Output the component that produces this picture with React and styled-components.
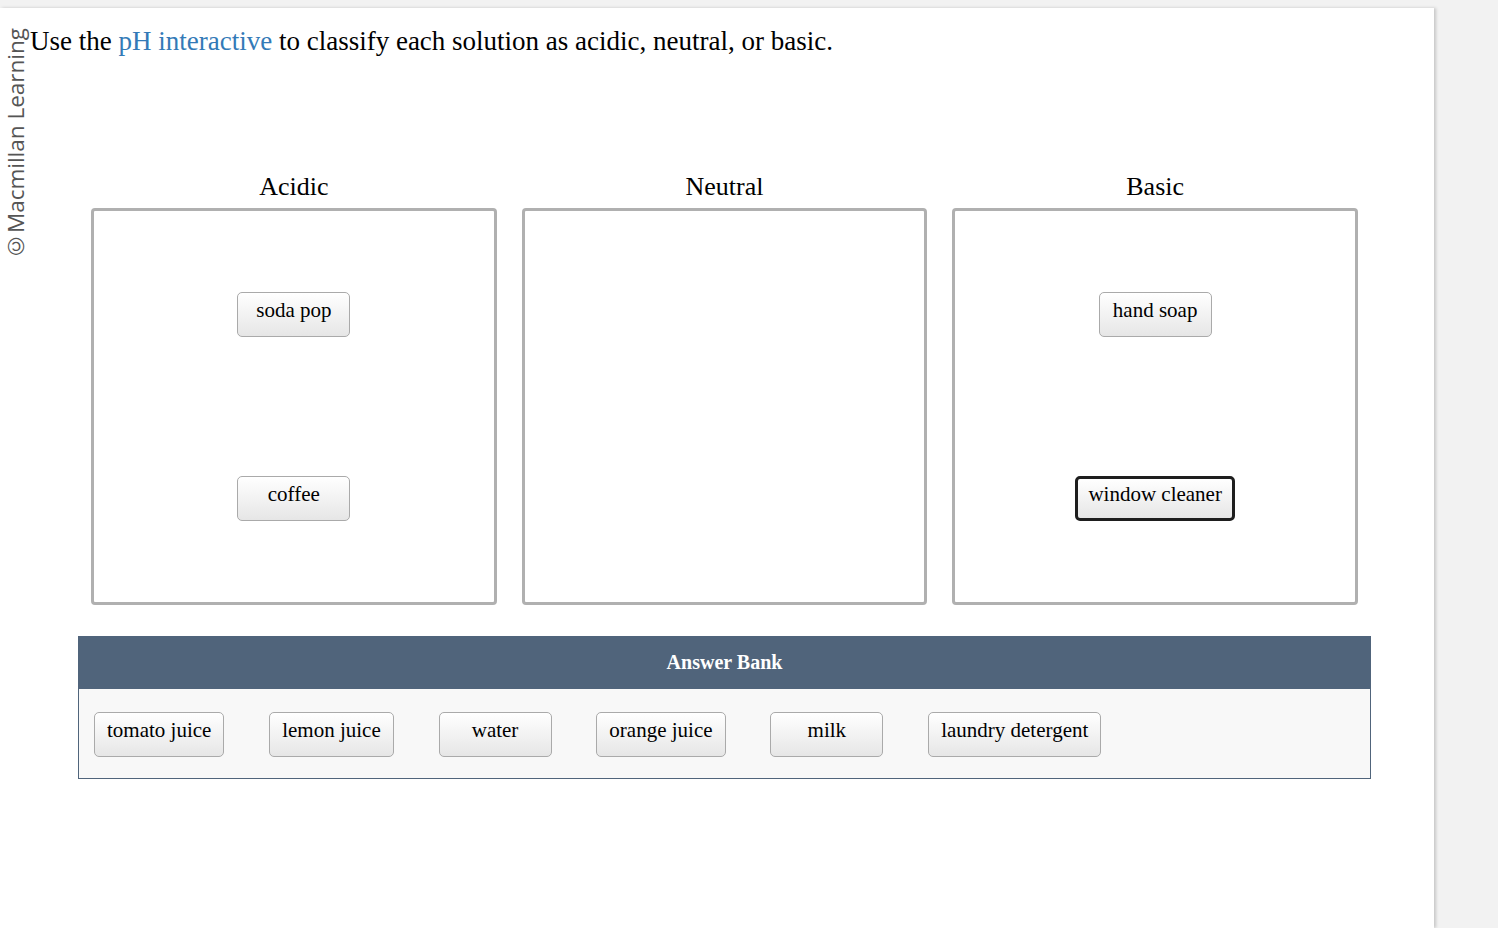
import React from "react";
import styled, { createGlobalStyle, css } from "styled-components";

const GlobalStyle = createGlobalStyle`
  html, body {
    margin: 0;
    padding: 0;
    background: #f2f2f2;
  }
  body {
    font-family: "Liberation Serif", "Times New Roman", serif;
    color: #000;
  }
`;

const Sheet = styled.div`
  position: relative;
  margin-top: 8px;
  width: 1434px;
  min-height: 920px;
  background: #ffffff;
  box-shadow: 2px 0 3px rgba(0, 0, 0, 0.18);
  padding: 18px 0 0 30px;
  box-sizing: border-box;
`;

const Copyright = styled.div`
  position: absolute;
  left: 4px;
  top: 20px;
  writing-mode: vertical-rl;
  transform: rotate(180deg);
  font-family: "Open Sans", "DejaVu Sans", sans-serif;
  font-size: 22.5px;
  line-height: 24px;
  color: #555;
  white-space: nowrap;
`;

const CopyMark = styled.span`
  font-family: "Liberation Sans", Arial, sans-serif;
  font-size: 23px;
  margin-right: 5px;
`;

const Prompt = styled.p`
  margin: 0;
  font-size: 27px;
  line-height: 31px;
`;

const Link = styled.a`
  color: #337ab7;
  text-decoration: none;
`;

const Workspace = styled.div`
  width: 1293px;
  margin: 115px 0 0 48px;
`;

const Bins = styled.div`
  display: grid;
  grid-template-columns: repeat(3, 1fr);
  gap: 25px;
  padding: 0 13px;
`;

const Bin = styled.section`
  display: flex;
  flex-direction: column;
  align-items: center;
`;

const BinTitle = styled.h3`
  margin: 0 0 7px;
  font-size: 26px;
  line-height: 29px;
  font-weight: normal;
`;

const Drop = styled.div`
  width: 100%;
  height: 397px;
  box-sizing: border-box;
  border: 3px solid #b0b0b0;
  border-radius: 4px;
  display: flex;
  flex-direction: column;
  align-items: center;
  justify-content: center;
  gap: 139px;
`;

const Chip = styled.button`
  height: 45px;
  min-width: 113px;
  box-sizing: border-box;
  padding: 5px 12px 0;
  display: inline-flex;
  justify-content: center;
  align-items: flex-start;
  font-family: "Liberation Serif", "Times New Roman", serif;
  font-size: 21px;
  line-height: 24px;
  color: #000;
  white-space: nowrap;
  border: 1px solid #aaaaaa;
  border-radius: 5px;
  background: linear-gradient(#ffffff, #e6e6e6);
  cursor: pointer;
  ${(p) =>
    p.$selected &&
    css`
      border: 3px solid #1e1e1e;
      padding: 3px 10px 0;
    `}
`;

const Bank = styled.div`
  margin-top: 31px;
  border: 1px solid #50647b;
  background: #f8f8f8;
`;

const BankHeader = styled.div`
  height: 52px;
  padding-bottom: 1px;
  box-sizing: border-box;
  background: #50647b;
  color: #fff;
  font-weight: bold;
  font-size: 20px;
  display: flex;
  align-items: center;
  justify-content: center;
`;

const BankItems = styled.div`
  display: flex;
  gap: 44.8px;
  padding: 23px 15px 21px;
`;

const bins = [
  { title: "Acidic", items: ["soda pop", "coffee"] },
  { title: "Neutral", items: [] },
  { title: "Basic", items: ["hand soap", "window cleaner"] },
];

const bank = [
  "tomato juice",
  "lemon juice",
  "water",
  "orange juice",
  "milk",
  "laundry detergent",
];

export default function App() {
  return (
    <>
      <GlobalStyle />
      <Sheet>
        <Copyright>
          <CopyMark>©</CopyMark>Macmillan Learning
        </Copyright>
        <Prompt>
          Use the <Link href="#">pH interactive</Link> to classify each
          solution as acidic, neutral, or basic.
        </Prompt>
        <Workspace>
          <Bins>
            {bins.map((b) => (
              <Bin key={b.title}>
                <BinTitle>{b.title}</BinTitle>
                <Drop>
                  {b.items.map((it) => (
                    <Chip key={it} $selected={it === "window cleaner"}>
                      {it}
                    </Chip>
                  ))}
                </Drop>
              </Bin>
            ))}
          </Bins>
          <Bank>
            <BankHeader>Answer Bank</BankHeader>
            <BankItems>
              {bank.map((it) => (
                <Chip key={it}>{it}</Chip>
              ))}
            </BankItems>
          </Bank>
        </Workspace>
      </Sheet>
    </>
  );
}
